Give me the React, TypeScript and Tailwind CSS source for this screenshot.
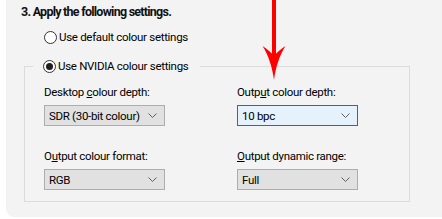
import { ReactNode } from 'react';

const font = { fontFamily: '"Segoe UI", Roboto, "Noto Sans", sans-serif' };

function Radio({ checked, children }: { checked?: boolean; children: ReactNode }) {
  return (
    <div className="flex items-center h-[16px] text-[11.5px] tracking-[-0.3px] leading-[16px] text-black whitespace-nowrap">
      <span className="w-[13px] h-[13px] rounded-full border border-[#333333] bg-white flex items-center justify-center">
        {checked && <span className="w-[7px] h-[7px] rounded-full bg-[#1f1f1f]" />}
      </span>
      <span className="ml-[2px]">{children}</span>
    </div>
  );
}

function Chevron() {
  return (
    <svg width="9" height="5" viewBox="0 0 9 5" className="shrink-0">
      <path d="M0.5 0.5 L4.5 4.5 L8.5 0.5" fill="none" stroke="#606060" strokeWidth="1" />
    </svg>
  );
}

function Select({ value, focused }: { value: string; focused?: boolean }) {
  return (
    <div
      className={
        focused
          ? 'w-[121px] h-[21px] border border-[#0078d7] bg-[#e5f1fb] flex items-center justify-between pl-[4px] pr-[7px]'
          : 'w-[121px] h-[21px] border border-[#adadad] bg-[#e1e1e1] flex items-center justify-between pl-[4px] pr-[7px]'
      }
    >
      <span className="text-[11.5px] tracking-[-0.3px] leading-[16px] text-black whitespace-nowrap">{value}</span>
      <Chevron />
    </div>
  );
}

function Field({ label, value, focused }: { label: ReactNode; value: string; focused?: boolean }) {
  return (
    <div className="flex flex-col">
      <div className="h-[16px] text-[11.5px] tracking-[-0.3px] leading-[16px] text-black whitespace-nowrap">{label}</div>
      <div className="mt-[5px]">
        <Select value={value} focused={focused} />
      </div>
    </div>
  );
}

export default function App() {
  return (
    <div className="relative w-[442px] h-[219px] bg-white overflow-hidden" style={font}>
      <div className="ml-[6px] h-[217px] bg-[#f3f3f3] rounded-bl-[8px] pt-[3px]">
        <h2 className="pl-[15px] text-[12.5px] tracking-[-0.75px] leading-[17px] font-bold text-[#111111] whitespace-nowrap">
          3. Apply the following settings.
        </h2>

        <div className="mt-[9px] pl-[38px]">
          <Radio>Use default colour settings</Radio>
        </div>

        <fieldset className="mt-[13px] ml-[18px] w-[386px] border border-[#dcdcdc] pb-[11px]">
          <legend className="ml-[8px] pl-[10px] pr-[12px]">
            <Radio checked>Use NVIDIA colour settings</Radio>
          </legend>

          <div className="grid grid-cols-[193px_121px] pl-[19px] pt-[10px] gap-y-[22px]">
            <Field
              label={<>Desktop <span className="underline">c</span>olour depth:</>}
              value="SDR (30-bit colour)"
            />
            <Field
              label={<>Outp<span className="underline">u</span>t colour depth:</>}
              value="10 bpc"
              focused
            />
            <Field
              label={<>O<span className="underline">u</span>tput colour format:</>}
              value="RGB"
            />
            <Field
              label={<><span className="underline">O</span>utput dynamic range:</>}
              value="Full"
            />
          </div>
        </fieldset>
      </div>

      {/* red pointer arrow */}
      <svg className="absolute left-0 top-0 pointer-events-none" width="442" height="219" viewBox="0 0 442 219">
        <rect x="272" y="0" width="4" height="58" fill="#ff0000" />
        <path
          d="M274 80 C272.5 68 268.5 55 262.5 46 C267 49 271 52 274 56 C277 52 281 49 285.5 46 C279.5 55 275.5 68 274 80 Z"
          fill="#ff0000"
        />
      </svg>
    </div>
  );
}
